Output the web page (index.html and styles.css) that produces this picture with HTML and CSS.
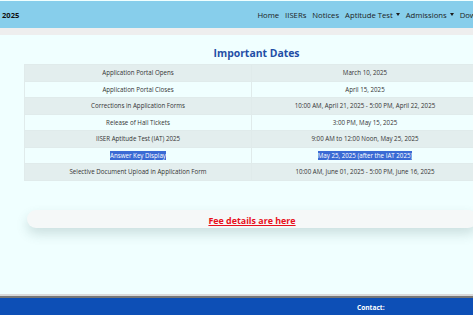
FILE: index.html
```html
<!DOCTYPE html>
<html lang="en">
<head>
    <meta charset="UTF-8">
    <meta name="viewport" content="width=device-width, initial-scale=1.0">
    <title>Important Dates</title>
    <link rel="stylesheet" href="styles.css">
</head>
<body>
    <header class="topbar">
        <span class="brand">2025</span>
        <nav class="menu">
            <a class="menu-li">Home</a>
            <a class="menu-li">IISERs</a>
            <a class="menu-li">Notices</a>
            <a class="menu-li drop">Aptitude Test</a>
            <a class="menu-li drop">Admissions</a>
            <a class="menu-li drop">Downloads</a>
        </nav>
    </header>
    <div class="strip"></div>
    <main class="content">
        <h2 class="title">Important Dates</h2>
        <table class="dates">
            <tr><td>Application Portal Opens</td><td>March 10, 2025</td></tr>
            <tr><td>Application Portal Closes</td><td>April 15, 2025</td></tr>
            <tr><td>Corrections in Application Forms</td><td>10:00 AM, April 21, 2025 - 5:00 PM, April 22, 2025</td></tr>
            <tr><td>Release of Hall Tickets</td><td>3:00 PM, May 15, 2025</td></tr>
            <tr><td>IISER Aptitude Test (IAT) 2025</td><td>9:00 AM to 12:00 Noon, May 25, 2025</td></tr>
            <tr><td><span class="sel">Answer Key Display</span></td><td><span class="sel">May 25, 2025 (after the IAT 2025)</span></td></tr>
            <tr><td>Selective Document Upload in Application Form</td><td>10:00 AM, June 01, 2025 - 5:00 PM, June 16, 2025</td></tr>
        </table>
        <div class="fee">
            <a href="#" class="fee-link">Fee details are here</a>
        </div>
    </main>
    <footer class="foot">
        <span class="contact">Contact:</span>
    </footer>
</body>
</html>
```

FILE: styles.css
```css
html, body{
    margin: 0;
    padding: 0;
}
body{
    width: 473px;
    height: 315px;
    overflow: hidden;
    background: #f0ffff;
    font-family: "Open Sans", "Noto Sans", sans-serif;
    color: #333;
}
.topbar{
    display: flex;
    align-items: center;
    height: 27px;
    margin-top: 1px;
    background: #87ceeb;
    white-space: nowrap;
}
.brand{
    padding-left: 2px;
    font-size: 7.6px;
    font-weight: 700;
    color: #111;
}
.menu{
    display: flex;
    gap: 6px;
    margin-left: 238px;
}
.menu-li{
    font-size: 7.7px;
    color: #1c1c1c;
}
.drop::after{
    content: '';
    display: inline-block;
    margin-left: 3px;
    vertical-align: 1.5px;
    border-top: 3px solid #1c1c1c;
    border-left: 2.5px solid transparent;
    border-right: 2.5px solid transparent;
}
.strip{
    height: 7px;
    background: #eeeeee;
}
.content{
    width: 455px;
    padding: 0 0 0 24px;
}
.title{
    margin: 11px 0 0 10px;
    height: 18px;
    line-height: 14px;
    text-align: center;
    font-size: 10.4px;
    font-weight: 700;
    color: #1f4ea6;
}
.dates{
    width: 455px;
    border-collapse: collapse;
    table-layout: fixed;
}
.dates td{
    height: 16.5px;
    padding: 0;
    box-sizing: border-box;
    text-align: center;
    font-size: 6.2px;
    color: #333;
    border: 1px solid #e0ebeb;
}
.dates td:first-child{
    width: 227px;
}
.dates tr:nth-child(odd) td{
    background: #e3eeee;
}
.dates tr:nth-child(even) td{
    background: #f0ffff;
}
.sel{
    background: #3a6ad4;
    color: #fff;
}
.fee{
    margin: 29px 0 0 3px;
    width: 450px;
    height: 18px;
    line-height: 17px;
    text-align: center;
    background: #f5f8f8;
    border-radius: 9px;
    box-shadow: 0 6px 12px rgba(60, 100, 100, .2);
}
.fee-link{
    font-size: 8.9px;
    font-weight: 700;
    color: #e8101c;
    text-decoration: underline;
}
.foot{
    margin-top: 66px;
    height: 21px;
    border-top: 2px solid #dadada;
    background: #0d4fb6;
    box-shadow: inset 0 2px 0 #777;
    padding-left: 357px;
    box-sizing: border-box;
    line-height: 16px;
}
.contact{
    font-size: 6.6px;
    font-weight: 700;
    color: #fff;
}
```
